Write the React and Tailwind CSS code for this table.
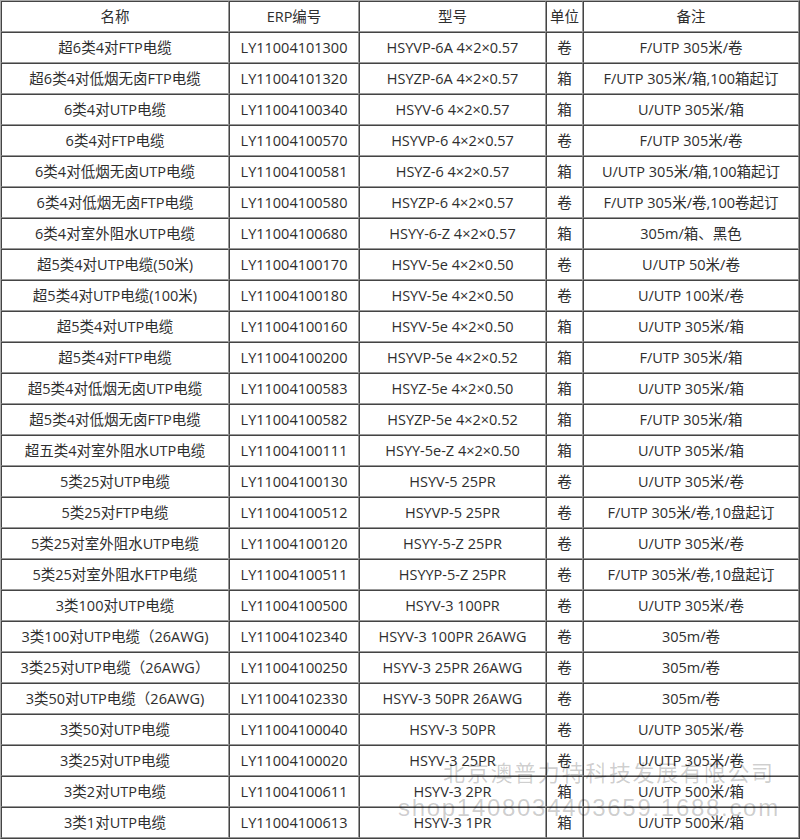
const rows = [
  ['超6类4对FTP电缆', 'LY11004101300', 'HSYVP-6A 4×2×0.57', '卷', 'F/UTP 305米/卷'],
  ['超6类4对低烟无卤FTP电缆', 'LY11004101320', 'HSYZP-6A 4×2×0.57', '箱', 'F/UTP 305米/箱,100箱起订'],
  ['6类4对UTP电缆', 'LY11004100340', 'HSYV-6 4×2×0.57', '箱', 'U/UTP 305米/箱'],
  ['6类4对FTP电缆', 'LY11004100570', 'HSYVP-6 4×2×0.57', '卷', 'F/UTP 305米/卷'],
  ['6类4对低烟无卤UTP电缆', 'LY11004100581', 'HSYZ-6 4×2×0.57', '箱', 'U/UTP 305米/箱,100箱起订'],
  ['6类4对低烟无卤FTP电缆', 'LY11004100580', 'HSYZP-6 4×2×0.57', '卷', 'F/UTP 305米/卷,100卷起订'],
  ['6类4对室外阻水UTP电缆', 'LY11004100680', 'HSYY-6-Z 4×2×0.57', '箱', '305m/箱、黑色'],
  ['超5类4对UTP电缆(50米)', 'LY11004100170', 'HSYV-5e 4×2×0.50', '卷', 'U/UTP 50米/卷'],
  ['超5类4对UTP电缆(100米)', 'LY11004100180', 'HSYV-5e 4×2×0.50', '卷', 'U/UTP 100米/卷'],
  ['超5类4对UTP电缆', 'LY11004100160', 'HSYV-5e 4×2×0.50', '箱', 'U/UTP 305米/箱'],
  ['超5类4对FTP电缆', 'LY11004100200', 'HSYVP-5e 4×2×0.52', '箱', 'F/UTP 305米/箱'],
  ['超5类4对低烟无卤UTP电缆', 'LY11004100583', 'HSYZ-5e 4×2×0.50', '箱', 'U/UTP 305米/箱'],
  ['超5类4对低烟无卤FTP电缆', 'LY11004100582', 'HSYZP-5e 4×2×0.52', '箱', 'F/UTP 305米/箱'],
  ['超五类4对室外阻水UTP电缆', 'LY11004100111', 'HSYY-5e-Z 4×2×0.50', '箱', 'U/UTP 305米/箱'],
  ['5类25对UTP电缆', 'LY11004100130', 'HSYV-5 25PR', '卷', 'U/UTP 305米/卷'],
  ['5类25对FTP电缆', 'LY11004100512', 'HSYVP-5 25PR', '卷', 'F/UTP 305米/卷,10盘起订'],
  ['5类25对室外阻水UTP电缆', 'LY11004100120', 'HSYY-5-Z 25PR', '卷', 'U/UTP 305米/卷'],
  ['5类25对室外阻水FTP电缆', 'LY11004100511', 'HSYYP-5-Z 25PR', '卷', 'F/UTP 305米/卷,10盘起订'],
  ['3类100对UTP电缆', 'LY11004100500', 'HSYV-3 100PR', '卷', 'U/UTP 305米/卷'],
  ['3类100对UTP电缆（26AWG)', 'LY11004102340', 'HSYV-3 100PR 26AWG', '卷', '305m/卷'],
  ['3类25对UTP电缆（26AWG）', 'LY11004100250', 'HSYV-3 25PR 26AWG', '卷', '305m/卷'],
  ['3类50对UTP电缆（26AWG)', 'LY11004102330', 'HSYV-3 50PR 26AWG', '卷', '305m/卷'],
  ['3类50对UTP电缆', 'LY11004100040', 'HSYV-3 50PR', '卷', 'U/UTP 305米/卷'],
  ['3类25对UTP电缆', 'LY11004100020', 'HSYV-3 25PR', '卷', 'U/UTP 305米/卷'],
  ['3类2对UTP电缆', 'LY11004100611', 'HSYV-3 2PR', '箱', 'U/UTP 500米/箱'],
  ['3类1对UTP电缆', 'LY11004100613', 'HSYV-3 1PR', '箱', 'U/UTP 500米/箱'],
]

const headers = ['名称', 'ERP编号', '型号', '单位', '备注']
const widths = ['w-[228px]', 'w-[130px]', 'w-[187px]', 'w-[37px]', 'w-[216px]']

// cell borders mimic the old border="1" inset look
const cell =
  'h-[31px] p-0 text-center align-middle whitespace-nowrap border border-t-[#444] border-l-[#444] border-b-[#999] border-r-[#999]'

export default function App() {
  return (
    <div
      className="relative w-[800px] bg-white text-[14.5px] text-[#2e2e2e] overflow-hidden"
      style={{ fontFamily: '"Open Sans", "Noto Sans CJK SC", sans-serif' }}
    >
      <table className="table-fixed w-[800px] border-separate border-spacing-0 border border-t-[#aaa] border-l-[#aaa] border-b-[#444] border-r-[#444]">
        <thead>
          <tr>
            {headers.map((h, i) => (
              <th key={h} className={`${cell} ${widths[i]} font-normal`}>
                {h}
              </th>
            ))}
          </tr>
        </thead>
        <tbody>
          {rows.map((r) => (
            <tr key={r[1]}>
              {r.map((v, i) => (
                <td key={i} className={cell}>
                  {v}
                </td>
              ))}
            </tr>
          ))}
        </tbody>
      </table>

      {/* watermark */}
      <div
        className="absolute left-[443px] top-[760px] text-[22px] leading-none tracking-[1.7px] text-black/20 pointer-events-none"
        style={{ fontFamily: '"Noto Sans CJK SC", sans-serif' }}
      >
        北京澳普力特科技发展有限公司
      </div>
      <div
        className="absolute left-[398px] top-[796px] text-[24px] leading-none tracking-[1.7px] text-black/20 pointer-events-none"
        style={{ fontFamily: '"Liberation Sans", sans-serif' }}
      >
        shop1408034403659.1688.com
      </div>
    </div>
  )
}
